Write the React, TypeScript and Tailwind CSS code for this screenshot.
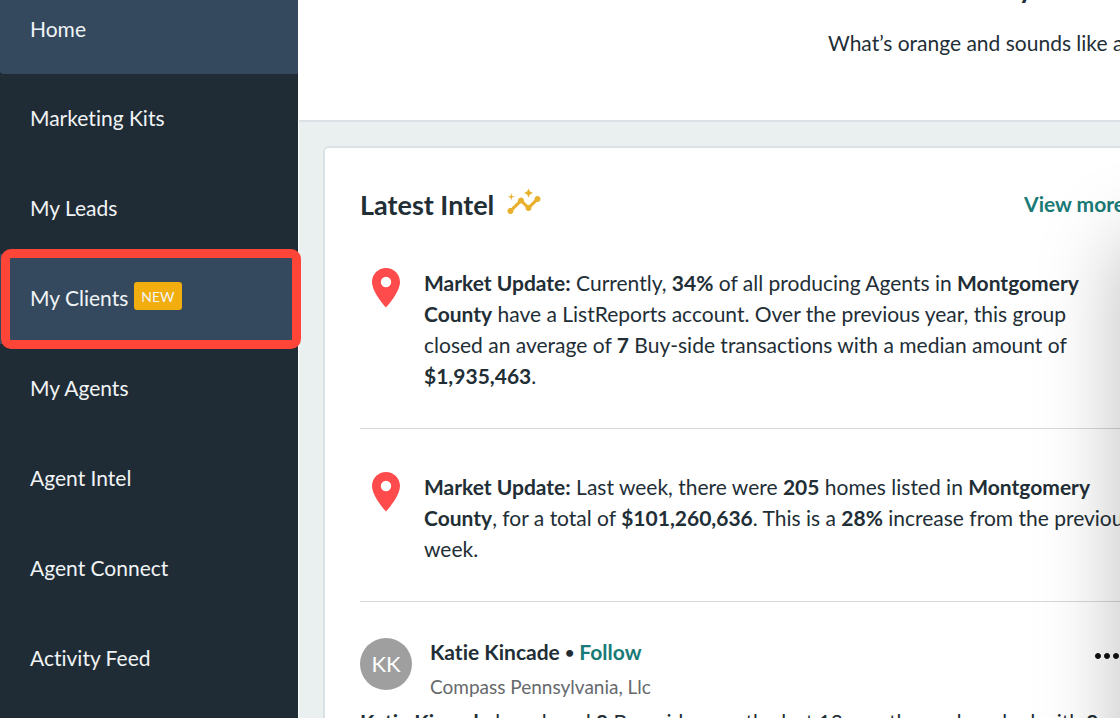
import type { ReactNode } from "react";
import { MdInsights, MdMoreHoriz } from "react-icons/md";

type NavItem = { label: string; badge?: string; active?: boolean; highlighted?: boolean };

const navItems: NavItem[] = [
  { label: "Marketing Kits" },
  { label: "My Leads" },
  { label: "My Clients", badge: "NEW", active: true, highlighted: true },
  { label: "My Agents" },
  { label: "Agent Intel" },
  { label: "Agent Connect" },
  { label: "Activity Feed" },
];

function Sidebar() {
  return (
    <nav className="relative z-10 w-[299px] shrink-0 border-r border-white bg-[#202c35] text-[#f1f4f6]">
      <ul>
        <li>
          <a href="#home" className="flex h-[74px] items-center rounded-bl-sm bg-[#34495e] pb-[18px] pl-[30px]">
            Home
          </a>
        </li>
        {navItems.map((item) => (
          <li key={item.label} className="relative">
            <a
              href="#section"
              className={`flex h-[90px] items-center gap-1.5 pb-1 pl-[30px] ${item.active ? "bg-[#34495e]" : ""}`}
            >
              {item.label}
              {item.badge && (
                <span className="mb-0.5 flex h-7 items-center rounded-[3px] bg-[#f1ae0e] px-[7px] text-[14px]">
                  {item.badge}
                </span>
              )}
            </a>
            {item.highlighted && (
              <span className="pointer-events-none absolute -top-[5px] -right-[3px] -bottom-[5px] left-px rounded-[10px] border-[9px] border-[#ff4438]" />
            )}
          </li>
        ))}
      </ul>
    </nav>
  );
}

function Pin() {
  return (
    <svg viewBox="0 0 28 40" className="mt-px ml-3 h-10 w-7 shrink-0" fill="#ff4b4b" aria-hidden="true">
      <path
        fillRule="evenodd"
        d="M14 0C6.26 0 0 6.26 0 14c0 10.5 14 25.5 14 25.5S28 24.500 28 14C28 6.260 21.740 0 14 0zm0 19.200a5.200 5.200 0 1 1 0-10.400 5.200 5.200 0 0 1 0 10.400z"
      />
    </svg>
  );
}

function Update({ children }: { children: ReactNode }) {
  return (
    <li className="flex gap-6 border-b border-[#d3d8da] pt-[42px] pb-[37px] first:pt-[45px]">
      <Pin />
      <p className="whitespace-nowrap">{children}</p>
    </li>
  );
}

export default function App() {
  return (
    <div className="flex min-h-screen overflow-hidden font-['Lato',sans-serif] text-[21px] leading-[31px] text-[#222e36] [font-variant-ligatures:none]">
      <Sidebar />
      <main className="relative h-screen min-w-0 flex-1 overflow-hidden bg-[#eaeff0]">
        <header className="h-[122px] overflow-hidden border-b-2 border-[#dbe2e6] bg-white pl-[529px] whitespace-nowrap">
          <h1 className="-mt-7 pl-3 text-[28px] font-bold">Joke of the Day</h1>
          <p className="mt-6">What’s orange and sounds like a parrot?</p>
        </header>

        <section className="mt-6 -mr-[42px] ml-6 rounded-md border-2 border-[#dbe2e6] bg-white px-[35px] pt-[38px]">
          <div className="flex h-9 items-center justify-between">
            <h2 className="flex items-center gap-3 text-[27px] font-bold">
              Latest Intel
              <MdInsights className="mb-1 size-9 text-[#e8b02c]" />
            </h2>
            <a href="#intel" className="pb-0.5 font-bold text-[#197a76]">View more</a>
          </div>

          <ul>
            <Update>
              <b>Market Update:</b> Currently, <b>34%</b> of all producing Agents in <b>Montgomery</b>
              <br />
              <b>County</b> have a ListReports account. Over the previous year, this group
              <br />
              closed an average of <b>7</b> Buy-side transactions with a median amount of
              <br />
              <b>$1,935,463</b>.
            </Update>
            <Update>
              <b>Market Update:</b> Last week, there were <b>205</b> homes listed in <b>Montgomery</b>
              <br />
              <b>County</b>, for a total of <b>$101,260,636</b>. This is a <b>28%</b> increase from the previous
              <br />
              week.
            </Update>
          </ul>

          <article>
            <div className="flex items-start pt-[34px]">
              <span className="mt-0.5 flex size-[52px] items-center justify-center rounded-full bg-[#9f9f9f] pb-0.5 text-[22px] text-white">
                KK
              </span>
              <div className="ml-[18px] flex-1">
                <p className="font-bold">
                  Katie Kincade <span className="align-[2px] text-base leading-none">•</span>{" "}
                  <a href="#follow" className="text-[#197a76]">Follow</a>
                </p>
                <p className="mt-1 text-[19px] text-[#66696c]">Compass Pennsylvania, Llc</p>
              </div>
              <button type="button" aria-label="More options" className="mt-0.5 text-[#111]">
                <MdMoreHoriz className="size-9" />
              </button>
            </div>
            <p className="mt-1 whitespace-nowrap">
              <b>Katie Kincade</b> has closed <b>8</b> Buy-side over the last 12 months, and worked with <b>8</b>
            </p>
          </article>
        </section>

        <div className="pointer-events-none absolute top-60 -bottom-24 left-full w-96 shadow-[0_0_76px_rgba(0,0,0,0.26)]" />
      </main>
    </div>
  );
}
